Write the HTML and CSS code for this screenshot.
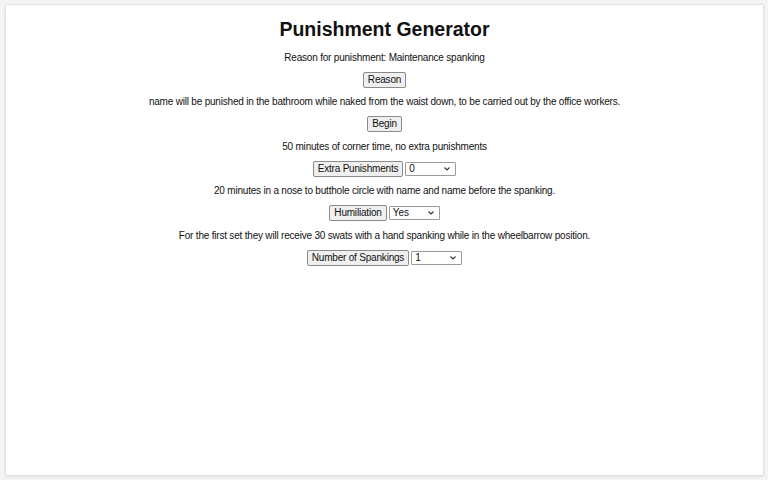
FILE: index.html
```html
<html lang="en">
  <head>
    <meta charset="UTF-8" />
    <meta name="viewport" content="width=device-width, initial-scale=1.0" />
    <title>Punishment Generator</title>
    <link rel="stylesheet" href="styles.css">
  </head>
  <body>
    <div class="generator">
      <h1>Punishment Generator</h1>
      <p id="reason-text">Reason for punishment: Maintenance spanking</p>
      <div class="row">
        <button class="gen-button" type="button">Reason</button>
      </div>
      <p id="begin-text">name will be punished in the bathroom while naked from the waist down, to be carried out by the office workers.</p>
      <div class="row">
        <button class="gen-button" type="button">Begin</button>
      </div>
      <p id="extra-text">50 minutes of corner time, no extra punishments</p>
      <div class="row">
        <button class="gen-button" type="button">Extra Punishments</button>
        <select class="gen-select">
          <option>0</option>
          <option>1</option>
          <option>2</option>
          <option>3</option>
        </select>
      </div>
      <p id="humiliation-text">20 minutes in a nose to butthole circle with name and name before the spanking.</p>
      <div class="row">
        <button class="gen-button" type="button">Humiliation</button>
        <select class="gen-select">
          <option>Yes</option>
          <option>No</option>
        </select>
      </div>
      <p id="spanking-text">For the first set they will receive 30 swats with a hand spanking while in the wheelbarrow position.</p>
      <div class="row">
        <button class="gen-button" type="button">Number of Spankings</button>
        <select class="gen-select">
          <option>1</option>
          <option>2</option>
          <option>3</option>
        </select>
      </div>
    </div>
  </body>
</html>
```

FILE: styles.css
```css
body {
  font-family: "Liberation Sans", Arial, sans-serif;
  background-color: #f4f4f4;
  margin: 0;
  padding: 4px 4px 4px 5px;
  height: 100vh;
  box-sizing: border-box;
}
.generator {
  background-color: white;
  border: 1px solid #e2e2e2;
  box-shadow: 0 1px 3px rgba(0, 0, 0, 0.08);
  border-radius: 2px;
  height: 100%;
  box-sizing: border-box;
  padding: 13px 10px;
  display: flex;
  flex-direction: column;
  align-items: center;
  gap: 7.75px;
  color: #111;
}
.generator h1 {
  font-size: 19.5px;
  line-height: 22px;
  margin: 0 0 3px 0;
}
.generator p {
  font-size: 10px;
  letter-spacing: -0.2px;
  line-height: 13px;
  margin: 0;
}
.row {
  display: flex;
  align-items: center;
  gap: 2px;
  height: 16px;
}
.gen-button {
  font-family: "Liberation Sans", Arial, sans-serif;
  font-size: 10px;
  letter-spacing: -0.2px;
  color: #111;
  background-color: #efefef;
  border: 1px solid #8a8a8a;
  border-radius: 2px;
  padding: 1px 4px;
  height: 16px;
  line-height: 12px;
}
.gen-select {
  appearance: none;
  font-family: "Liberation Sans", Arial, sans-serif;
  font-size: 10px;
  color: #111;
  width: 51px;
  height: 14px;
  line-height: 12px;
  padding: 0 0 0 3px;
  border: 1px solid #9a9a9a;
  border-radius: 1px;
  background: white url("data:image/svg+xml,%3Csvg xmlns='http://www.w3.org/2000/svg' width='6' height='4' viewBox='0 0 6 4'%3E%3Cpath d='M0.5 0.5 L3 3 L5.5 0.5' fill='none' stroke='%23333' stroke-width='1.1'/%3E%3C/svg%3E") no-repeat right 5px center;
}
```
